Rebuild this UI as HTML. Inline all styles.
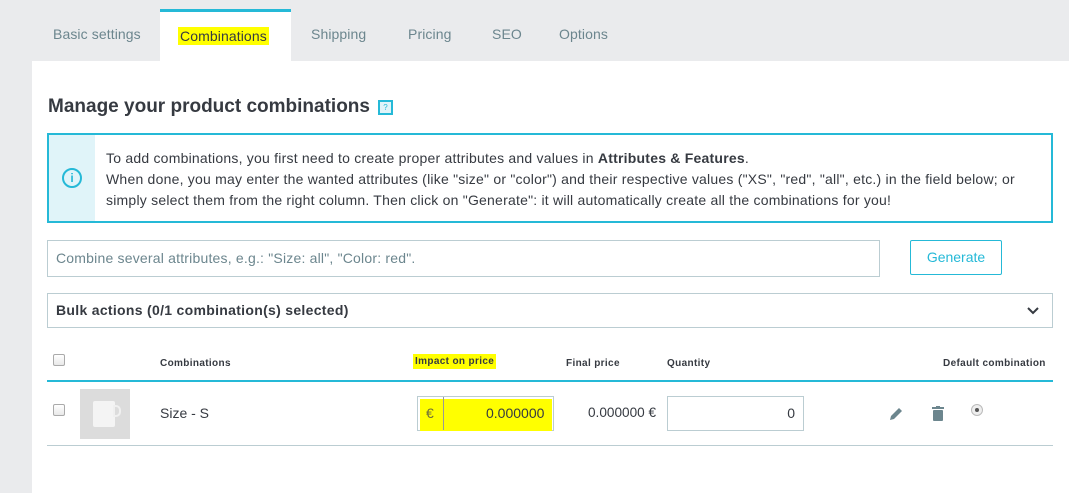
<!DOCTYPE html>
<html><head><style>
*{box-sizing:border-box;margin:0;padding:0}
body{width:1069px;height:493px;overflow:hidden;background:#eaebed;font-family:"Liberation Sans",sans-serif;color:#363a41;position:relative}
.a{position:absolute}
.tab{position:absolute;top:26px;font-size:14px;color:#6c868e;letter-spacing:0.1px}
.panel{position:absolute;left:32px;top:61px;width:1037px;height:432px;background:#fff}
.hl{background:#ffff00}
.cb{position:absolute;width:12px;height:12px;border:1px solid #aaa;border-radius:2px;background:linear-gradient(#fff,#e8e8e8)}
.h{position:absolute;top:358px;font-size:10px;font-weight:bold;color:#363a41;letter-spacing:0.35px}
</style></head><body>
<div class="tab" style="left:53px">Basic settings</div>
<div class="a" style="left:160px;top:9px;width:131px;height:52px;background:#fff;border-top:3px solid #25b9d7"></div>
<div class="tab" style="left:178px;top:28px;color:#363a41"><span class="hl" style="padding:1px 2px">Combinations</span></div>
<div class="tab" style="left:311px">Shipping</div>
<div class="tab" style="left:408px">Pricing</div>
<div class="tab" style="left:492px">SEO</div>
<div class="tab" style="left:559px">Options</div>
<div class="panel"></div>
<div class="a" style="left:48px;top:96px;font-size:19px;font-weight:bold;color:#363a41">Manage your product combinations</div>
<div class="a" style="left:378px;top:100px;width:15px;height:15px;border:2px solid #25b9d7;background:#e0f4f9;font-size:8px;text-align:center;line-height:11px;color:#25b9d7">?</div>
<div class="a" style="left:47px;top:133px;width:1006px;height:90px;border:2px solid #25b9d7"></div>
<div class="a" style="left:49px;top:135px;width:46px;height:86px;background:#e0f4f9"></div>
<div class="a" style="left:62px;top:168px;width:20px;height:20px;border:2px solid #25b9d7;border-radius:50%;color:#25b9d7;font-size:12px;font-weight:bold;text-align:center;line-height:16px">i</div>
<div class="a" style="left:106px;top:148px;font-size:14px;letter-spacing:0.22px;line-height:21px;color:#363a41;white-space:nowrap">To add combinations, you first need to create proper attributes and values in <b>Attributes &amp; Features</b>.<br>When done, you may enter the wanted attributes (like "size" or "color") and their respective values ("XS", "red", "all", etc.) in the field below; or<br>simply select them from the right column. Then click on "Generate": it will automatically create all the combinations for you!</div>
<div class="a" style="left:47px;top:240px;width:833px;height:37px;border:1px solid #bbcdd2;font-size:14px;letter-spacing:0.2px;color:#6c868e;padding:9px 8px;white-space:nowrap">Combine several attributes, e.g.: "Size: all", "Color: red".</div>
<div class="a" style="left:910px;top:240px;width:92px;height:35px;border:1px solid #25b9d7;border-radius:2px;color:#25b9d7;font-size:14px;text-align:center;line-height:33px">Generate</div>
<div class="a" style="left:47px;top:293px;width:1006px;height:35px;border:1px solid #bbcdd2;font-size:14px;letter-spacing:0.3px;font-weight:bold;padding:8px 8px">Bulk actions (0/1 combination(s) selected)</div>
<svg class="a" style="left:1027px;top:306px" width="12" height="10"><path d="M1 2l5 5 5-5" stroke="#363a41" stroke-width="2" fill="none"/></svg>
<div class="cb" style="left:53px;top:354px"></div>
<div class="h" style="left:160px">Combinations</div>
<div class="h" style="left:413px;top:356px"><span class="hl" style="padding:2px 2px">Impact on price</span></div>
<div class="h" style="left:566px">Final price</div>
<div class="h" style="left:667px">Quantity</div>
<div class="h" style="left:943px">Default combination</div>
<div class="a" style="left:47px;top:380px;width:1006px;height:2px;background:#25b9d7"></div>
<div class="cb" style="left:53px;top:404px"></div>
<div class="a" style="left:80px;top:389px;width:50px;height:50px;background:#dcdcdc"><div style="position:absolute;left:13px;top:12px;width:22px;height:26px;background:#f4f4f4;border-radius:2px"></div><div style="position:absolute;left:33px;top:16px;width:8px;height:12px;border:2px solid #f0f0f0;border-radius:0 5px 5px 0"></div></div>
<div class="a" style="left:160px;top:405px;font-size:14px">Size - S</div>
<div class="a" style="left:417px;top:396px;width:137px;height:35px;border:1px solid #bbcdd2"></div>
<div class="a" style="left:420px;top:399px;width:132px;height:32px;background:#ffff00"></div>
<div class="a" style="left:443px;top:397px;width:1px;height:33px;background:#999"></div>
<div class="a" style="left:426px;top:405px;font-size:14px;color:#6c6c3a">€</div>
<div class="a" style="left:486px;top:405px;font-size:14px">0.000000</div>
<div class="a" style="left:588px;top:405px;font-size:13.6px">0.000000 €</div>
<div class="a" style="left:667px;top:396px;width:137px;height:35px;border:1px solid #bbcdd2;font-size:14px;text-align:right;padding:8px 8px">0</div>
<svg class="a" style="left:889px;top:406px" width="15" height="15"><path d="M1 14l1-4 8-8 3 3-8 8z" fill="#6c868e"/></svg>
<svg class="a" style="left:932px;top:406px" width="12" height="15"><rect x="0" y="1" width="12" height="2" fill="#6c868e"/><rect x="4" y="0" width="4" height="2" fill="#6c868e"/><rect x="1" y="4" width="10" height="11" rx="1" fill="#6c868e"/></svg>
<div class="a" style="left:971px;top:404px;width:12px;height:12px;border:1px solid #bbb;border-radius:50%;background:#eee"><div style="position:absolute;left:3px;top:3px;width:4px;height:4px;border-radius:50%;background:#555"></div></div>
<div class="a" style="left:47px;top:445px;width:1006px;height:1px;background:#bbcdd2"></div>
</body></html>
